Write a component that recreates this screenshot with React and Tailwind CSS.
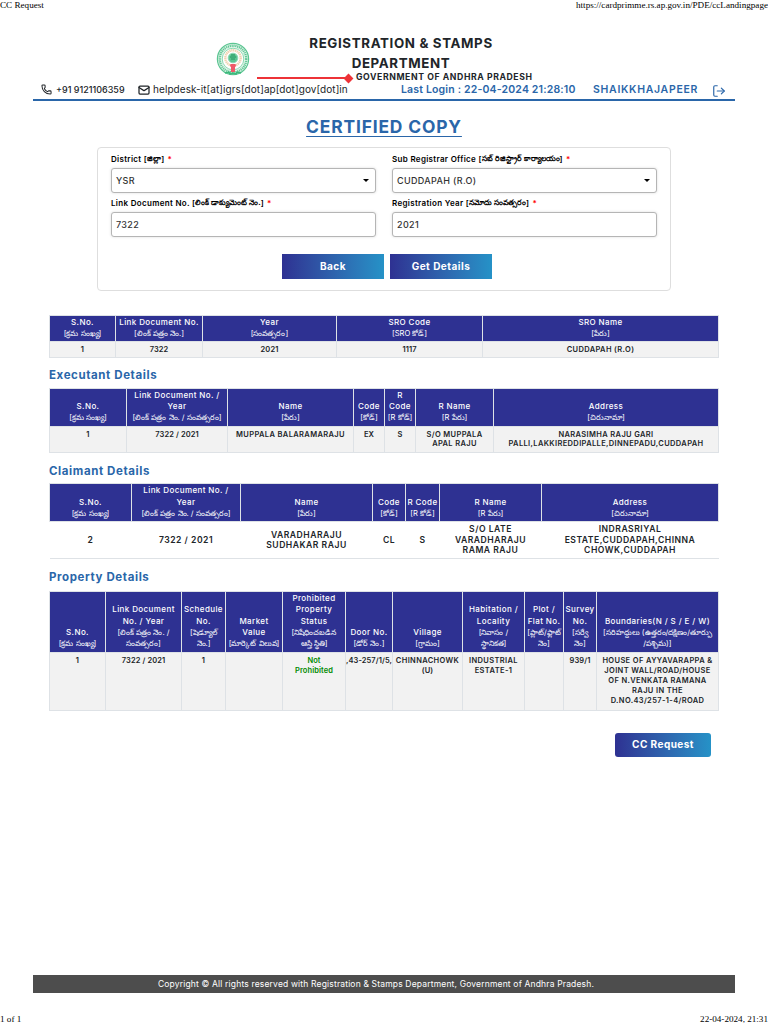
import React from 'react';
import { LogOut, Mail, Phone } from 'lucide-react';

const summary = {
  cols: ['w-[66px]', 'w-[87px]', 'w-[134px]', 'w-[146px]', 'w-[236px]'],
  head: [
    ['S.No.', '[క్రమ సంఖ్య]'],
    ['Link Document No.', '[లింక్ పత్రం నెం.]'],
    ['Year', '[సంవత్సరం]'],
    ['SRO Code', '[SRO కోడ్]'],
    ['SRO Name', '[పేరు]'],
  ],
  body: [['1'], ['7322'], ['2021'], ['1117'], ['CUDDAPAH (R.O)']],
};

const executant = {
  cols: ['w-[77px]', 'w-[101px]', 'w-[126px]', 'w-[31px]', 'w-[31px]', 'w-[78px]', 'w-[225px]'],
  head: [
    ['S.No.', '[క్రమ సంఖ్య]'],
    ['Link Document No. /', 'Year', '[లింక్ పత్రం నెం. / సంవత్సరం]'],
    ['Name', '[పేరు]'],
    ['Code', '[కోడ్]'],
    ['R', 'Code', '[R కోడ్]'],
    ['R Name', '[R పేరు]'],
    ['Address', '[చిరునామా]'],
  ],
  body: [
    ['1'],
    ['7322 / 2021'],
    ['MUPPALA BALARAMARAJU'],
    ['EX'],
    ['S'],
    ['S/O MUPPALA', 'APAL RAJU'],
    ['NARASIMHA RAJU GARI', 'PALLI,LAKKIREDDIPALLE,DINNEPADU,CUDDAPAH'],
  ],
};

const claimant = {
  cols: ['w-[82px]', 'w-[109px]', 'w-[132px]', 'w-[33px]', 'w-[34px]', 'w-[102px]', 'w-[177px]'],
  head: [
    ['S.No.', '[క్రమ సంఖ్య]'],
    ['Link Document No. /', 'Year', '[లింక్ పత్రం నెం. / సంవత్సరం]'],
    ['Name', '[పేరు]'],
    ['Code', '[కోడ్]'],
    ['R Code', '[R కోడ్]'],
    ['R Name', '[R పేరు]'],
    ['Address', '[చిరునామా]'],
  ],
  body: [
    ['2'],
    ['7322 / 2021'],
    ['VARADHARAJU', 'SUDHAKAR RAJU'],
    ['CL'],
    ['S'],
    ['S/O LATE', 'VARADHARAJU', 'RAMA RAJU'],
    ['INDRASRIYAL', 'ESTATE,CUDDAPAH,CHINNA', 'CHOWK,CUDDAPAH'],
  ],
};

const property = {
  cols: [
    'w-[56px]', 'w-[76px]', 'w-[44px]', 'w-[57px]', 'w-[63px]', 'w-[47px]',
    'w-[70px]', 'w-[62px]', 'w-[39px]', 'w-[33px]', 'w-[122px]',
  ],
  head: [
    ['S.No.', '[క్రమ సంఖ్య]'],
    ['Link Document', 'No. / Year', '[లింక్ పత్రం నెం. /', 'సంవత్సరం]'],
    ['Schedule', 'No.', '[షెడ్యూల్', 'నెం.]'],
    ['Market', 'Value', '[మార్కెట్ విలువ]'],
    ['Prohibited', 'Property', 'Status', '[నిషేధించబడిన', 'ఆస్తి స్థితి]'],
    ['Door No.', '[డోర్ నెం.]'],
    ['Village', '[గ్రామం]'],
    ['Habitation /', 'Locality', '[నివాసం /', 'స్థానికత]'],
    ['Plot /', 'Flat No.', '[ప్లాట్/ఫ్లాట్', 'నెం]'],
    ['Survey', 'No.', '[సర్వే', 'నెం]'],
    ['Boundaries(N / S / E / W)', '[సరిహద్దులు (ఉత్తరం/దక్షిణం/తూర్పు', '/పశ్చిమ)]'],
  ],
  body: [
    ['1'],
    ['7322 / 2021'],
    ['1'],
    [],
    ['Not', 'Prohibited'],
    [',43-257/1/5,'],
    ['CHINNACHOWK', '(U)'],
    ['INDUSTRIAL', 'ESTATE-1'],
    [],
    ['939/1'],
    ['HOUSE OF AYYAVARAPPA &', 'JOINT WALL/ROAD/HOUSE', 'OF N.VENKATA RAMANA', 'RAJU IN THE', 'D.NO.43/257-1-4/ROAD'],
  ],
};

const isTelugu = (text) => /[\u0c00-\u0c7f]/.test(text);

// Capitals are set wider than digits and lower case
const bodyTracking = (text) => (/[A-Z]{3}/.test(text) ? 'tracking-[0.36px]' : 'tracking-[0.1px]');

function DataTable({ data, headClass, rowClass, cellClass, greenCol }) {
  return (
    <table className="w-[669px] table-fixed border-collapse text-center">
      <colgroup>
        {data.cols.map((width, i) => (
          <col key={i} className={width} />
        ))}
      </colgroup>
      <thead>
        <tr className={`bg-[#2e3192] text-white ${headClass}`}>
          {data.head.map((lines, i) => (
            <th key={i} className="border border-[#dee2e6] p-0 pb-[2px] align-bottom font-medium">
              {lines.map((line) => (
                <div
                  key={line}
                  className={`flex h-[11.5px] items-center justify-center whitespace-nowrap ${
                    isTelugu(line) ? 'text-[7.6px] font-normal' : 'text-[8px] tracking-[0.4px]'
                  }`}
                >
                  {line}
                </div>
              ))}
            </th>
          ))}
        </tr>
      </thead>
      <tbody>
        <tr className={rowClass}>
          {data.body.map((lines, i) => (
            <td key={i} className={`p-0 ${cellClass} ${i === greenCol ? 'text-[#008a00]' : 'text-[#212529]'}`}>
              {lines.map((line) => (
                <div key={line} className={`flex justify-center whitespace-nowrap ${bodyTracking(line)}`}>
                  {line}
                </div>
              ))}
            </td>
          ))}
        </tr>
      </tbody>
    </table>
  );
}

function Field({ label, telugu, value, select }) {
  return (
    <div className="h-[44px]">
      <div className="flex h-[14px] text-[8px] font-semibold leading-[10px] tracking-[0.32px] text-black whitespace-nowrap">
        <span>{label} [</span>
        <span className="text-[7.6px] tracking-normal">{telugu}</span>
        <span>]</span>
        <span className="ml-[3px] text-[#ff0000]">*</span>
      </div>
      <div className="flex h-[25px] items-center justify-between rounded-[3px] border border-[#b5b5b5] bg-white px-[4px] text-[9px] font-medium tracking-[0.35px] text-[#333] shadow-[0_0_3px_#ddd]">
        <span>{value}</span>
        {select && <span className="mr-[2px] border-x-[3px] border-t-[3px] border-x-transparent border-t-black" />}
      </div>
    </div>
  );
}

function Emblem() {
  return (
    <svg viewBox="0 0 34 34" className="h-[34px] w-[34px]">
      <circle cx="17" cy="17" r="15.6" fill="#e6f6ed" stroke="#5cc592" strokeWidth="1.2" />
      <circle cx="17" cy="17" r="13.3" fill="none" stroke="#62c895" strokeWidth="2.4" strokeDasharray="1.2 .7" />
      <circle cx="17" cy="17" r="10.8" fill="#fff" stroke="#6fcf9f" strokeWidth=".8" />
      <circle cx="17" cy="16" r="7.7" fill="none" stroke="#f0d3b2" strokeWidth="2.4" strokeDasharray="1.4 .5" />
      <circle cx="17" cy="16" r="4.8" fill="#5cc592" stroke="#8bd9b2" />
      <path d="M14 15h6M15 13h4M15 17h4" stroke="#168b50" strokeWidth=".8" />
      <path d="M14.5 22h5l.5 2-1 1v5h-4v-5l-1-1z" fill="#ef5a68" />
      <path d="M9 31l4-1 1 2 3-1 3 1 1-2 4 1" fill="none" stroke="#3cb97c" strokeWidth="1.5" />
    </svg>
  );
}

function SectionTitle({ children }) {
  return <h2 className="text-[11.5px] font-bold leading-[16px] tracking-[0.6px] text-[#2a66a9]">{children}</h2>;
}

export default function App() {
  return (
    <div className="flex h-[1024px] w-[768px] flex-col overflow-hidden bg-white font-['Inter','Noto_Sans',sans-serif]">
      <div className="flex h-[35px] justify-between font-['Liberation_Serif',serif] text-[9.15px] leading-[10px] text-black">
        <span>CC Request</span>
        <span>https://cardprimme.rs.ap.gov.in/PDE/ccLandingpage</span>
      </div>

      {/* Header */}
      <header className="mx-[33px] h-[66px] border-b-2 border-[#2a66a9]">
        <div className="flex h-[47px] pl-[183px]">
          <div className="mt-[7px]">
            <Emblem />
          </div>
          <div className="ml-[7px] w-[276px] text-[#212529]">
            <div className="-mt-[2px] pl-[12px] text-center text-[13.3px] font-bold leading-[20px] tracking-[0.65px]">
              <div>REGISTRATION &amp; STAMPS</div>
              <div>DEPARTMENT</div>
            </div>
            <div className="flex h-[10px] items-center text-[8.7px] font-bold tracking-[0.58px] whitespace-nowrap">
              <span className="h-[2px] w-[89px] bg-[#ed3237]" />
              <span className="-ml-[1px] size-[7px] rotate-45 bg-[#ed3237]" />
              <span className="ml-[4px]">GOVERNMENT OF ANDHRA PRADESH</span>
            </div>
          </div>
        </div>
        <div className="flex h-[15px] items-center whitespace-nowrap text-[#212529]">
          <Phone className="ml-[8px] size-[11px]" strokeWidth={2.2} />
          <span className="ml-[4px] w-[68px] text-[9px] font-medium">+91 9121106359</span>
          <Mail className="ml-[14px] size-[12px]" strokeWidth={2.5} />
          <span className="ml-[3px] w-[197px] text-[10px] leading-[15px] tracking-[0.07px]">
            helpdesk-it[at]igrs[dot]ap[dot]gov[dot]in
          </span>
          <span className="ml-[51px] w-[174px] text-[10.5px] font-semibold tracking-[0.17px] text-[#2a66a9]">
            Last Login : 22-04-2024 21:28:10
          </span>
          <span className="ml-[18px] w-[105px] text-[10.5px] font-semibold tracking-[0.7px] text-[#2a66a9]">
            SHAIKKHAJAPEER
          </span>
          <LogOut className="ml-[14px] mt-[2px] size-[14px] text-[#2a66a9]" />
        </div>
      </header>

      <h1 className="mt-[14px] h-[32px] text-center text-[17.4px] font-bold leading-[24px] tracking-[0.85px] text-[#2a66a9] underline decoration-1 underline-offset-[3px]">
        CERTIFIED COPY
      </h1>

      {/* Search form */}
      <section className="mx-auto h-[144px] w-[574px] rounded-[4px] border border-[#dedede] px-[13px] pt-[6px]">
        <div className="grid grid-cols-[265px_265px] gap-x-[16px]">
          <Field label="District" telugu="జిల్లా" value="YSR" select />
          <Field label="Sub Registrar Office" telugu="సబ్ రిజిస్ట్రార్ కార్యాలయం" value="CUDDAPAH (R.O)" select />
          <Field label="Link Document No." telugu="లింక్ డాక్యుమెంట్ నెం." value="7322" />
          <Field label="Registration Year" telugu="నమోదు సంవత్సరం" value="2021" />
        </div>
        <div className="mt-[12px] flex gap-[6px] pl-[171px] text-[10px] font-bold tracking-[0.5px] text-white">
          <button className="h-[25px] w-[102px] bg-linear-to-r from-[#2e3192] to-[#2592c7]">Back</button>
          <button className="h-[25px] w-[102px] bg-linear-to-r from-[#2e3192] to-[#2592c7]">Get Details</button>
        </div>
      </section>

      {/* Document details */}
      <main className="mt-[24px] flex flex-col px-[49px]">
        <DataTable
          data={summary}
          headClass="h-[26px]"
          rowClass="h-[16px] bg-[#f2f2f2]"
          cellClass="border border-[#dee2e6] align-middle text-[7.5px] font-semibold leading-[10px]"
        />
        <div className="mt-[9px] h-[20.5px]">
          <SectionTitle>Executant Details</SectionTitle>
        </div>
        <DataTable
          data={executant}
          headClass="h-[38px]"
          rowClass="h-[26px] bg-[#f2f2f2]"
          cellClass="border border-[#dee2e6] pt-[3px] align-top text-[7.5px] font-semibold leading-[9.7px]"
        />
        <div className="mt-[10px] h-[20.5px]">
          <SectionTitle>Claimant Details</SectionTitle>
        </div>
        <DataTable
          data={claimant}
          headClass="h-[38px]"
          rowClass="h-[37px] border-b border-[#dee2e6] bg-white"
          cellClass="align-middle text-[8.6px] font-semibold leading-[10.5px] [&>div]:tracking-[0.5px]"
        />
        <div className="mt-[10px] h-[21.5px]">
          <SectionTitle>Property Details</SectionTitle>
        </div>
        <DataTable
          data={property}
          headClass="h-[61px]"
          rowClass="h-[58px] bg-[#f2f2f2]"
          cellClass="border border-[#dee2e6] pt-[3px] align-top text-[7.5px] font-semibold leading-[10.2px]"
          greenCol={4}
        />
        <button className="mt-[22px] mr-[8px] h-[24px] w-[96px] self-end rounded-[3px] bg-linear-to-r from-[#2e3192] to-[#2592c7] text-[10px] font-bold tracking-[0.45px] text-white">
          CC Request
        </button>
      </main>

      <footer className="mx-[33px] mt-auto flex h-[18px] shrink-0 items-center justify-center bg-[#4d4d4d] pr-[16px] text-[8.5px] tracking-[0.17px] text-white">
        Copyright © All rights reserved with Registration &amp; Stamps Department, Government of Andhra Pradesh.
      </footer>
      <div className="mt-[21px] flex shrink-0 justify-between font-['Liberation_Serif',serif] text-[9.15px] leading-[10px] text-black">
        <span>1 of 1</span>
        <span>22-04-2024, 21:31</span>
      </div>
    </div>
  );
}
